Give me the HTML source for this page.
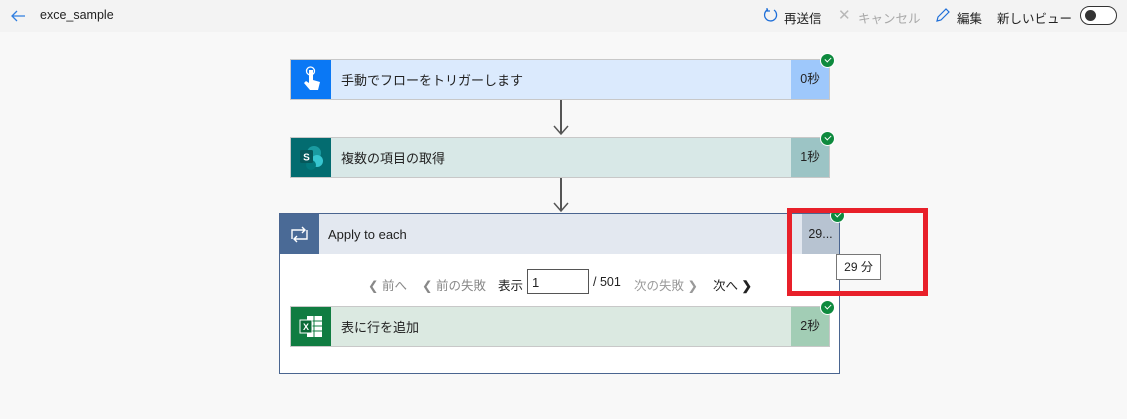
<!DOCTYPE html>
<html><head><meta charset="utf-8"><style>
*{box-sizing:border-box;margin:0;padding:0}
body{width:1127px;height:419px;background:#f8f8f8;font-family:"Liberation Sans","Noto Sans CJK JP",sans-serif;position:relative;overflow:hidden;color:#222}
.top{position:absolute;left:0;top:0;width:1127px;height:32px;background:#f3f3f3;font-size:12.5px}
.a{position:absolute}
.card{position:absolute;height:41px;border:1px solid #c8c8c8;font-size:13px}
.card .ic{position:absolute;left:0;top:0;width:40px;height:39px}
.card .t{position:absolute;left:50px;top:10px}
.card .d{position:absolute;right:0;top:0;width:38px;height:39px;font-size:12.5px;text-align:center;line-height:39px}
.chk{position:absolute;width:15px;height:15px;border-radius:50%;background:#0e8a3e;border:1px solid #fff}
.chk:after{content:"";position:absolute;left:4px;top:3px;width:5px;height:3px;border-left:1.6px solid #fff;border-bottom:1.6px solid #fff;transform:rotate(-45deg)}
.ln{position:absolute;left:560px;width:1.5px;background:#555}
.pg{position:absolute;top:275px;font-size:12.5px}
</style></head><body>
<div class="top">
<svg class="a" style="left:10px;top:8px" width="16" height="16" viewBox="0 0 16 16"><path d="M15 8H2M7 3L2 8l5 5" stroke="#2f7ee0" stroke-width="1.3" fill="none"/></svg>
<div class="a" style="left:40px;top:8px">exce_sample</div>
<svg class="a" style="left:763px;top:7px" width="15" height="16" viewBox="0 0 15 16"><path d="M5 2.5A6 6 0 1 0 11 3" stroke="#1f6fd8" stroke-width="1.3" fill="none"/><path d="M4 1v3h3" stroke="#1f6fd8" stroke-width="1.2" fill="none"/></svg>
<div class="a" style="left:784px;top:8px">再送信</div>
<div class="a" style="left:838px;top:6px;color:#b8b8b8;font-size:15px">✕</div>
<div class="a" style="left:858px;top:8px;color:#a8a8a8">キャンセル</div>
<svg class="a" style="left:935px;top:7px" width="16" height="16" viewBox="0 0 16 16"><path d="M2 14l1-4 8-8 3 3-8 8z" stroke="#1f6fd8" stroke-width="1.2" fill="none"/></svg>
<div class="a" style="left:957px;top:8px">編集</div>
<div class="a" style="left:997px;top:8px">新しいビュー</div>
<div class="a" style="left:1080px;top:6px;width:37px;height:19px;border:1.5px solid #333;border-radius:10px;background:#fff"><div class="a" style="left:4px;top:3px;width:11px;height:11px;border-radius:50%;background:#333"></div></div>
</div>

<div class="card" style="left:290px;top:59px;width:540px;background:#dbeafd">
<div class="ic" style="background:#0a78f5"><svg width="40" height="39" viewBox="0 0 40 39"><path d="M18 10v13l-3-2-2 2 6 7h8l2-8-7-2v-10z" fill="#fff"/><circle cx="19.5" cy="11" r="4" fill="none" stroke="#fff" stroke-width="1.3"/></svg></div>
<div class="t">手動でフローをトリガーします</div><div class="d" style="background:#9ec8fb">0秒</div></div>
<div class="chk" style="left:820px;top:53px"></div>
<div class="ln" style="top:100px;height:34px"></div>
<svg class="a" style="left:553px;top:124px" width="16" height="12"><path d="M1 2l7 8 7-8" stroke="#555" stroke-width="1.5" fill="none"/></svg>

<div class="card" style="left:290px;top:137px;width:540px;background:#d8e8e7">
<div class="ic" style="background:#036c70"><svg width="40" height="39" viewBox="0 0 40 39"><circle cx="23" cy="15" r="7" fill="#1a9ba1"/><circle cx="26" cy="23" r="6" fill="#37c6d0"/><circle cx="20" cy="27" r="5" fill="#03787c"/><rect x="9" y="12" width="13" height="13" rx="1.5" fill="#05595c"/><text x="15.5" y="22.5" font-size="10" fill="#fff" text-anchor="middle" font-family="Liberation Sans" font-weight="bold">S</text></svg></div>
<div class="t">複数の項目の取得</div><div class="d" style="background:#9cc4c5">1秒</div></div>
<div class="chk" style="left:820px;top:131px"></div>
<div class="ln" style="top:178px;height:33px"></div>
<svg class="a" style="left:553px;top:201px" width="16" height="12"><path d="M1 2l7 8 7-8" stroke="#555" stroke-width="1.5" fill="none"/></svg>

<div class="a" style="left:279px;top:213px;width:561px;height:161px;border:1px solid #4a6590;background:#fff">
<div class="a" style="left:0;top:0;width:559px;height:40px;background:#e3e8f0"></div>
<div class="a" style="left:0;top:0;width:39px;height:40px;background:#4a6a96"><svg width="39" height="40" viewBox="0 0 39 40"><path d="M12 25V16h13M22 13l3 3-3 3M27 16v9H14M17 28l-3-3 3-3" stroke="#fff" stroke-width="1.4" fill="none"/></svg></div>
<div class="a" style="left:48px;top:13px;font-size:13px">Apply to each</div>
<div class="a" style="left:522px;top:0;width:37px;height:40px;background:#b7c3d1;font-size:12.5px;text-align:center;line-height:40px">29...</div>
</div>
<div class="chk" style="left:830px;top:208px"></div>
<div class="pg" style="left:368px;color:#888">❮ 前へ</div>
<div class="pg" style="left:422px;color:#888">❮ 前の失敗</div>
<div class="pg" style="left:498px">表示</div>
<div class="a" style="left:527px;top:269px;width:62px;height:25px;border:1px solid #555;background:#fff;font-size:13px;padding:5px 4px">1</div>
<div class="pg" style="left:593px">/ 501</div>
<div class="pg" style="left:634px;color:#999">次の失敗 ❯</div>
<div class="pg" style="left:713px">次へ <b>❯</b></div>

<div class="card" style="left:290px;top:306px;width:540px;background:#dbe9e1">
<div class="ic" style="background:#107c41"><svg width="40" height="39" viewBox="0 0 40 39"><rect x="16" y="9" width="15" height="21" fill="#fff"/><path d="M16 14h15M16 19h15M16 24h15M23 9v21" stroke="#107c41" stroke-width="1"/><rect x="9" y="13" width="12" height="13" fill="#0b6a37" stroke="#fff" stroke-width="1"/><text x="15" y="23" font-size="9" fill="#fff" text-anchor="middle" font-family="Liberation Sans" font-weight="bold">X</text></svg></div>
<div class="t">表に行を追加</div><div class="d" style="background:#a2cdb5">2秒</div></div>
<div class="chk" style="left:820px;top:300px"></div>

<div class="a" style="left:836px;top:254px;width:45px;height:26px;border:1px solid #777;background:#fff;font-size:12px;text-align:center;line-height:24px">29 分</div>
<div class="a" style="left:787px;top:208px;width:141px;height:88px;border:5px solid #e8202a"></div>
</body></html>
